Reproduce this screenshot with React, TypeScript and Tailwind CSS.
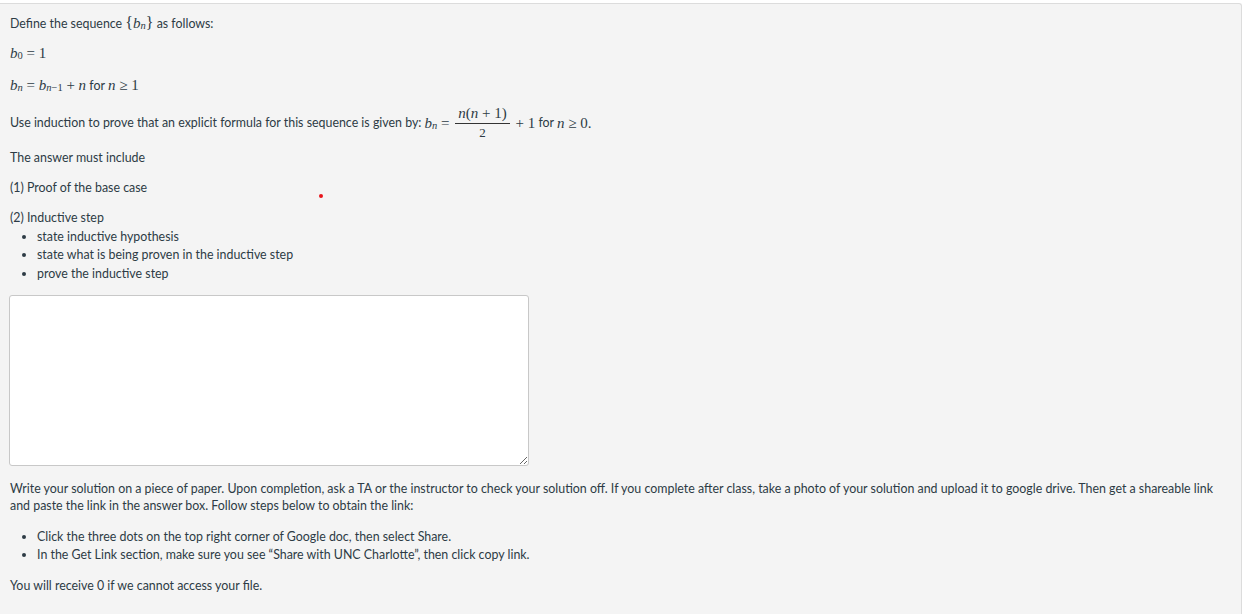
import React from "react";

function M({ children }: { children: React.ReactNode }) {
  return (
    <span className="font-['Liberation_Serif',serif] text-[15px] leading-none">
      {children}
    </span>
  );
}

function V({ children }: { children: React.ReactNode }) {
  return <i className="font-['Liberation_Serif',serif]">{children}</i>;
}

function Sub({ children }: { children: React.ReactNode }) {
  return <sub className="text-[10.5px] relative bottom-[-1px]">{children}</sub>;
}

export default function App() {
  return (
    <main className="bg-white w-full h-[614px] overflow-hidden font-['Lato',sans-serif] text-[12.4px] text-[#2d3b45]">
      <div className="relative mt-[3px] w-[1242px] h-[640px] bg-[#f4f4f4] border-t border-r border-[#dcdcdc] rounded-tr-[3px] px-[10px] pt-[11px]">

        <p className="leading-[18px] mb-[12px]">
          Define the sequence{" "}
          <M>
            <span className="text-[16px]">{"{"}</span>
            <V>b</V>
            <Sub><V>n</V></Sub>
            <span className="text-[16px]">{"}"}</span>
          </M>{" "}
          as follows:
        </p>

        <p className="leading-[18px] mb-[12px]">
          <M>
            <V>b</V>
            <Sub>0</Sub> = 1
          </M>
        </p>

        <p className="leading-[22px] mb-[12px]">
          <M>
            <V>b</V>
            <Sub><V>n</V></Sub> = <V>b</V>
            <Sub>
              <V>n</V>−1
            </Sub>{" "}
            + <V>n</V>
          </M>{" "}
          for{" "}
          <M>
            <V>n</V> ≥ 1
          </M>
        </p>

        <p className="h-[28px] mb-[12px] flex items-center">
          <span>Use induction to prove that an explicit formula for this sequence is given by:&nbsp;</span>
          <M>
            <V>b</V>
            <Sub><V>n</V></Sub> =&nbsp;
          </M>
          <span className="inline-flex flex-col items-center font-['Liberation_Serif',serif] text-[15px] leading-none mx-[2px] -mt-[2px]">
            <span className="px-[3px] pb-[2px]">
              <V>n</V>(<V>n</V> + 1)
            </span>
            <span className="w-full h-px bg-[#333]"></span>
            <span className="text-[13px] pt-[2px]">2</span>
          </span>
          <M>&nbsp;+ 1</M>
          <span>&nbsp;for&nbsp;</span>
          <M>
            <V>n</V> ≥ 0.
          </M>
        </p>

        <p className="leading-[18px] mb-[12px]">The answer must include</p>
        <p className="leading-[18px] mb-[12px]">(1) Proof of the base case</p>

        <div className="leading-[18.5px] mb-[12px]">
          <p>(2) Inductive step</p>
          <ul className="list-disc pl-[27px]">
            <li>state inductive hypothesis</li>
            <li>state what is being proven in the inductive step</li>
            <li>prove the inductive step</li>
          </ul>
        </div>

        <textarea className="block -ml-px w-[520px] h-[171px] bg-white border border-[#c8c8c8] rounded-[3px] outline-none"></textarea>

        <p className="leading-[17px] mt-[14px] mb-[14px] pr-[14px]">
          Write your solution on a piece of paper. Upon completion, ask a TA or the instructor to check your solution off. If you complete after class, take a photo of your solution and upload it to google drive. Then get a shareable link and paste the link in the answer box. Follow steps below to obtain the link:
        </p>

        <ul className="list-disc pl-[27px] leading-[18px] mb-[13px]">
          <li>Click the three dots on the top right corner of Google doc, then select Share.</li>
          <li>In the Get Link section, make sure you see “Share with UNC Charlotte”, then click copy link.</li>
        </ul>

        <p className="leading-[18px]">You will receive 0 if we cannot access your file.</p>

        <span className="absolute left-[319px] top-[190px] w-[4px] h-[4px] rounded-full bg-[#e8141b]"></span>
      </div>
    </main>
  );
}
